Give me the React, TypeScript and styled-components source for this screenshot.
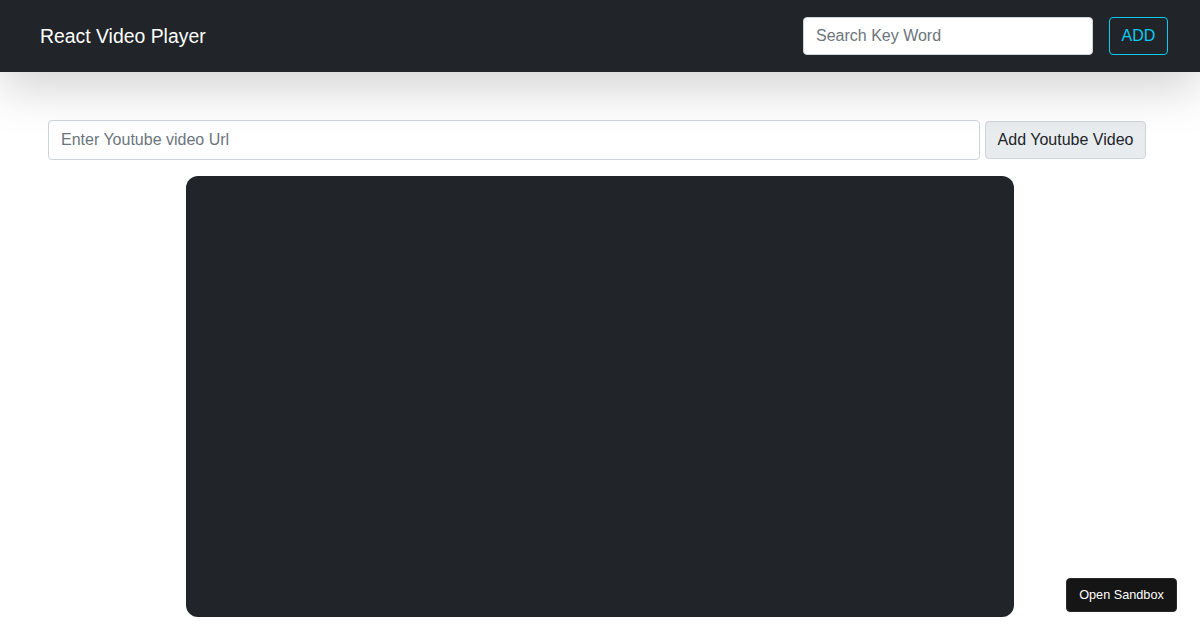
import React from "react";
import styled, { createGlobalStyle } from "styled-components";

const Global = createGlobalStyle`
  html, body { margin: 0; padding: 0; background: #fff; }
  body { font-family: "Liberation Sans", Arial, sans-serif; overflow: hidden; }
  * { box-sizing: border-box; }
`;

const Page = styled.div`
  width: 1200px;
  height: 630px;
  position: relative;
  overflow: hidden;
`;

const Navbar = styled.nav`
  height: 72px;
  background: #212529;
  display: flex;
  align-items: center;
  justify-content: space-between;
  padding: 0 32px 0 40px;
  box-shadow: 0 16px 48px rgba(0, 0, 0, 0.175);
  position: relative;
  z-index: 1;
`;

const Brand = styled.span`
  color: #fff;
  font-size: 19.4px;
  line-height: 30px;
  margin-top: -1px;
`;

const NavForm = styled.div`
  display: flex;
  align-items: center;
  gap: 16px;
`;

const Input = styled.input<{ $w?: number; $h: number }>`
  font-family: "Liberation Sans", Arial, sans-serif;
  font-size: 16px;
  color: #212529;
  background: #fff;
  border: 1px solid #ced4da;
  border-radius: 4px;
  padding: 0 12px;
  height: ${(p) => p.$h}px;
  ${(p) => (p.$w ? `width: ${p.$w}px;` : "flex: 1; min-width: 0;")}
  outline: none;
  &::placeholder { color: #6c757d; }
`;

const OutlineButton = styled.button`
  font-family: "Liberation Sans", Arial, sans-serif;
  font-size: 16px;
  height: 38px;
  width: 59px;
  color: #0dcaf0;
  background: transparent;
  border: 1px solid #0dcaf0;
  border-radius: 4px;
  padding: 0;
`;

const Main = styled.main`
  padding: 48px 54px 0 48px;
  display: flex;
  flex-direction: column;
  align-items: center;
  gap: 16px;
`;

const UrlRow = styled.div`
  width: 100%;
  display: flex;
  align-items: center;
  gap: 5px;
`;

const LightButton = styled.button`
  font-family: "Liberation Sans", Arial, sans-serif;
  font-size: 16px;
  color: #212529;
  height: 38px;
  width: 161px;
  background: #e9ecef;
  border: 1px solid #ced4da;
  border-radius: 4px;
  padding: 0;
  flex-shrink: 0;
`;

const Video = styled.div`
  width: 828px;
  height: 441px;
  background: #212529;
  border-radius: 12px;
  margin-left: 6px;
`;

const Sandbox = styled.button`
  position: absolute;
  right: 23px;
  bottom: 18px;
  width: 111px;
  height: 34px;
  background: #151515;
  color: #fff;
  border: 1px solid #2a2a2a;
  border-radius: 4px;
  font-family: "Liberation Sans", Arial, sans-serif;
  font-size: 12.7px;
  padding: 0;
`;

export default function App() {
  return (
    <Page>
      <Global />
      <Navbar>
        <Brand>React Video Player</Brand>
        <NavForm>
          <Input $w={290} $h={38} placeholder="Search Key Word" />
          <OutlineButton>ADD</OutlineButton>
        </NavForm>
      </Navbar>
      <Main>
        <UrlRow>
          <Input $h={40} placeholder="Enter Youtube video Url" />
          <LightButton>Add Youtube Video</LightButton>
        </UrlRow>
        <Video />
      </Main>
      <Sandbox>Open Sandbox</Sandbox>
    </Page>
  );
}
